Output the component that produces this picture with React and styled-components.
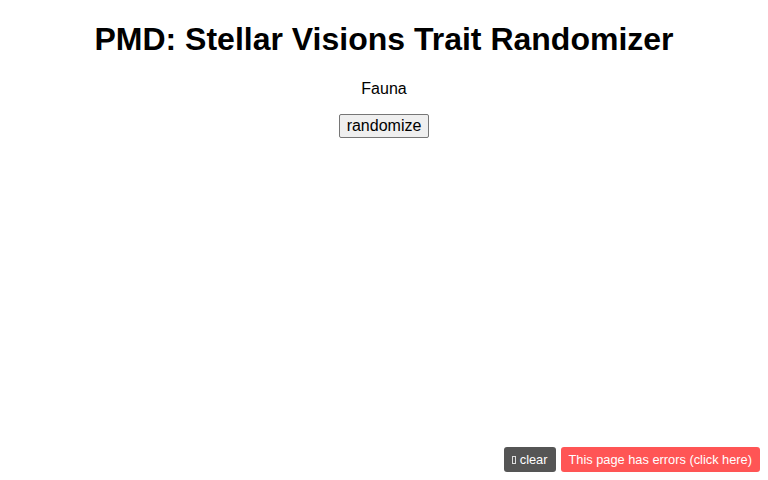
import React from "react";
import styled, { createGlobalStyle } from "styled-components";

const GlobalStyle = createGlobalStyle`
  body {
    margin: 8px;
    font-family: "Liberation Sans", Arial, sans-serif;
    background: #fff;
    color: #000;
  }
`;

const Page = styled.div`
  display: flex;
  flex-direction: column;
  align-items: center;
  text-align: center;
`;

const Title = styled.h1`
  font-size: 32px;
  font-weight: bold;
  margin: 13px 0 22px;
`;

const Category = styled.p`
  font-size: 16px;
  margin: 0 0 16px;
`;

const RandomButton = styled.button`
  font-family: "Liberation Sans", Arial, sans-serif;
  font-size: 16px;
  padding: 1px 7px;
  height: 24px;
  background: #efefef;
  border: 1px solid #767676;
  border-radius: 2px;
  color: #000;
`;

const ErrorBar = styled.div`
  position: fixed;
  right: 8px;
  bottom: 8px;
  display: flex;
  gap: 5px;
`;

const BarButton = styled.button`
  font-family: "Liberation Sans", Arial, sans-serif;
  font-size: 12.8px;
  height: 25px;
  padding: 0 8px;
  border: none;
  border-radius: 3px;
  color: #fff;
  background: ${(p) => (p.$danger ? "#ff5555" : "#555555")};
`;

const MissingGlyph = styled.span`
  display: inline-block;
  width: 4px;
  height: 8px;
  border: 1px solid #ddd;
  box-sizing: border-box;
  margin-right: 4px;
  vertical-align: 0;
`;

export default function App() {
  return (
    <>
      <GlobalStyle />
      <Page>
        <Title>PMD: Stellar Visions Trait Randomizer</Title>
        <Category>Fauna</Category>
        <RandomButton>randomize</RandomButton>
      </Page>
      <ErrorBar>
        <BarButton>
          <MissingGlyph />
          clear
        </BarButton>
        <BarButton $danger>This page has errors (click here)</BarButton>
      </ErrorBar>
    </>
  );
}
